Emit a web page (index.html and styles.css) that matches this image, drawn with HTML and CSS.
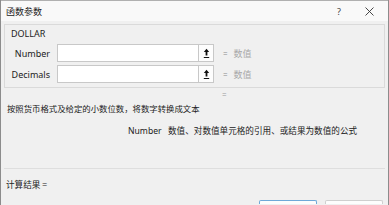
FILE: index.html
```html
<!DOCTYPE html>
<html>
<head>
<meta charset="utf-8">
<link rel="stylesheet" href="styles.css">
</head>
<body>
<div class="window">
  <div class="titlebar">
    <span class="title">函数参数</span>
    <span class="help">?</span>
    <span class="close">
      <svg width="9" height="9" viewBox="0 0 9 9"><path d="M0.5 0.5 L8.5 8.5 M8.5 0.5 L0.5 8.5" stroke="#333" stroke-width="0.9" fill="none"/></svg>
    </span>
  </div>
  <div class="content">
    <div class="group">
      <div class="fname">DOLLAR</div>
      <div class="arg">
        <span class="label">Number</span>
        <span class="input"></span>
        <span class="pick"><svg width="7" height="11" viewBox="0 0 7 11"><path d="M3.5 0.8 L6.2 4 L4.4 4 L4.4 7.4 L2.6 7.4 L2.6 4 L0.8 4 Z" fill="#111"/><rect x="0.8" y="9" width="5.4" height="1" fill="#111"/></svg></span>
        <span class="eq">=</span>
        <span class="val">数值</span>
      </div>
      <div class="arg">
        <span class="label">Decimals</span>
        <span class="input"></span>
        <span class="pick"><svg width="7" height="11" viewBox="0 0 7 11"><path d="M3.5 0.8 L6.2 4 L4.4 4 L4.4 7.4 L2.6 7.4 L2.6 4 L0.8 4 Z" fill="#111"/><rect x="0.8" y="9" width="5.4" height="1" fill="#111"/></svg></span>
        <span class="eq">=</span>
        <span class="val">数值</span>
      </div>
    </div>
    <div class="result-mark">=</div>
    <div class="desc">按照货币格式及给定的小数位数，将数字转换成文本</div>
    <div class="argdesc"><span class="argname">Number</span><span>数值、对数值单元格的引用、或结果为数值的公式</span></div>
    <div class="sep"></div>
    <div class="calc">计算结果 =</div>
    <div class="buttons">
      <span class="btn default"></span>
      <span class="btn"></span>
    </div>
  </div>
</div>
</body>
</html>
```
FILE: styles.css
```css
html, body {
  margin: 0;
  padding: 0;
}
body {
  width: 389px;
  height: 205px;
  overflow: hidden;
  background: #f0f0f0;
  font-family: "Noto Sans", "Noto Sans CJK SC", sans-serif;
  font-size: 9px;
  color: #1e1e1e;
}
.window {
  box-sizing: border-box;
  width: 389px;
  height: 205px;
  overflow: hidden;
  border-left: 1px solid #8c8c8c;
  border-right: 1px solid #8c8c8c;
  background: #f0f0f0;
}
.titlebar {
  height: 21px;
  background: #f9f9f9;
  display: flex;
  align-items: center;
  padding-left: 5px;
  border-top: 1px solid #b0b0b0;
  box-sizing: border-box;
}
.title {
  flex: 1;
  font-family: "Noto Sans CJK SC", sans-serif;
  font-size: 9px;
  color: #222;
}
.help {
  width: 10px;
  font-size: 9px;
  color: #444;
  margin-right: 18px;
}
.close {
  display: flex;
  margin-right: 14px;
}
.content {
  padding: 3px 3px 0 3px;
}
.group {
  box-sizing: border-box;
  height: 64px;
  border: 1px solid #dadada;
  padding: 3px 0 0 0;
}
.fname {
  height: 12px;
  line-height: 12px;
  padding-left: 6px;
  font-size: 9px;
  color: #222;
}
.arg {
  display: flex;
  align-items: center;
  height: 18px;
  margin-top: 3px;
}
.group .fname + .arg {
  margin-top: 4px;
}
.label {
  width: 45px;
  text-align: right;
  margin-right: 7px;
  font-size: 9px;
  color: #222;
}
.input {
  box-sizing: border-box;
  width: 141px;
  height: 18px;
  background: #fff;
  border: 1px solid #c8c8c8;
  border-right: none;
}
.pick {
  box-sizing: border-box;
  width: 16px;
  height: 18px;
  background: #fdfdfd;
  border: 1px solid #c8c8c8;
  display: flex;
  align-items: center;
  justify-content: center;
}
.eq {
  margin-left: 9px;
  color: #8a8a8a;
  font-size: 8px;
}
.val {
  margin-left: 6px;
  color: #a8a8a8;
  font-family: "Noto Sans CJK SC", sans-serif;
  font-size: 9px;
}
.result-mark {
  height: 14px;
  line-height: 14px;
  padding-left: 218px;
  color: #9a9a9a;
  font-size: 8px;
}
.desc {
  height: 12px;
  line-height: 12px;
  padding-left: 3px;
  font-family: "Noto Sans CJK SC", sans-serif;
  font-size: 8.4px;
  color: #222;
}
.argdesc {
  margin-top: 11px;
  height: 12px;
  line-height: 12px;
  padding-left: 124px;
  display: flex;
  font-family: "Noto Sans", "Noto Sans CJK SC", sans-serif;
  font-size: 8.6px;
  color: #222;
}
.argname {
  width: 40px;
}
.sep {
  margin-top: 31px;
  height: 1px;
  background: #dedede;
}
.calc {
  margin-top: 9px;
  height: 12px;
  line-height: 12px;
  padding-left: 2px;
  font-family: "Noto Sans CJK SC", sans-serif;
  font-size: 8.6px;
  color: #222;
}
.buttons {
  display: flex;
  justify-content: flex-end;
  gap: 8px;
  margin-top: 10px;
  padding-right: 2px;
}
.btn {
  box-sizing: border-box;
  width: 58px;
  height: 4px;
  background: #fdfdfd;
  border: 1px solid #cfcfcf;
  border-bottom: none;
  border-radius: 2px 2px 0 0;
}
.btn.default {
  border-color: #6fa9d8;
}
```
